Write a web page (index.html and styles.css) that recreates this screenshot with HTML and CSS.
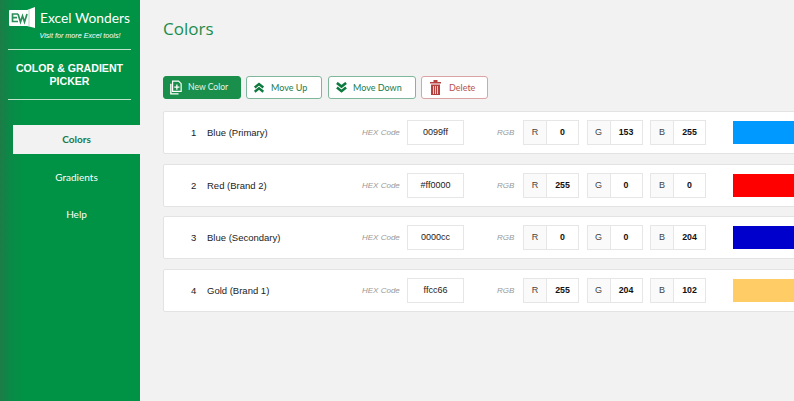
FILE: index.html
```html
<!DOCTYPE html>
<html lang="en">
<head>
<meta charset="utf-8">
<title>Color &amp; Gradient Picker</title>
<link rel="stylesheet" href="styles.css">
</head>
<body>
<div class="app">
  <aside class="sidebar">
    <div class="brand">
      <svg class="logo" width="27" height="22" viewBox="0 0 27 22">
        <path d="M0 4 Q0 3 1 3 L18 3 L26 0 L26 21 L18 19 L1 19 Q0 19 0 18 Z" fill="#fff"/>
        <path d="M20 2 L20 19.5" stroke="#9fcfb3" stroke-width=".8"/>
        <path d="M9 7 H3.5 V14.5 H9 M3.5 10.7 H8 M9 7 L11.5 15 L13.5 9 L15.5 15 L18 7" fill="none" stroke="#2b8f58" stroke-width="1.7"/>
      </svg>
      <span class="brand-name">Excel Wonders</span>
    </div>
    <div class="tagline">Visit for more Excel tools!</div>
    <h2 class="app-title">COLOR &amp; GRADIENT PICKER</h2>
    <nav class="nav">
      <a class="nav-item active">Colors</a>
      <a class="nav-item">Gradients</a>
      <a class="nav-item">Help</a>
    </nav>
  </aside>
  <main class="main">
    <h1 class="page-title">Colors</h1>
    <div class="toolbar">
      <button class="btn primary">
        <svg width="12" height="15" viewBox="0 0 14 17"><path d="M3 1 H10 L13 4 V13 H3 Z" fill="none" stroke="#fff" stroke-width="1.4"/><path d="M1 4 V16 H10" fill="none" stroke="#fff" stroke-width="1.6"/><path d="M8 5 V11 M5 8 H11" stroke="#fff" stroke-width="1.5"/></svg>
        New Color
      </button>
      <button class="btn green up">
        <svg width="12" height="11" viewBox="0 0 14 12"><path d="M2 6 L7 2 L12 6 M2 11 L7 7 L12 11" fill="none" stroke="#0f7a3f" stroke-width="2.8"/></svg>
        Move Up
      </button>
      <button class="btn green down">
        <svg width="13" height="11" viewBox="0 0 14 12"><path d="M2 1 L7 5 L12 1 M2 6 L7 10 L12 6" fill="none" stroke="#0f7a3f" stroke-width="2.8"/></svg>
        Move Down
      </button>
      <button class="btn red">
        <svg width="11" height="15" viewBox="0 0 11 15"><path d="M0 2 H11 V3.5 H0 Z M3.5 0 H7.5 V2 H3.5 Z" fill="#b5413f"/><path d="M1 4.5 H10 V15 H1 Z" fill="#b5413f"/><path d="M3.5 6 V14 M5.5 6 V14 M7.5 6 V14" stroke="#f2f2f2" stroke-width=".8"/></svg>
        Delete
      </button>
    </div>
    <div class="rows">
      <div class="row">
        <span class="num">1</span><span class="name">Blue (Primary)</span>
        <span class="cap hex-cap">HEX Code</span><span class="hex">0099ff</span>
        <span class="cap rgb-cap">RGB</span>
        <span class="chan"><i>R</i><b>0</b></span><span class="chan"><i>G</i><b>153</b></span><span class="chan"><i>B</i><b>255</b></span>
        <span class="swatch c1"></span>
      </div>
      <div class="row">
        <span class="num">2</span><span class="name">Red (Brand 2)</span>
        <span class="cap hex-cap">HEX Code</span><span class="hex">#ff0000</span>
        <span class="cap rgb-cap">RGB</span>
        <span class="chan"><i>R</i><b>255</b></span><span class="chan"><i>G</i><b>0</b></span><span class="chan"><i>B</i><b>0</b></span>
        <span class="swatch c2"></span>
      </div>
      <div class="row">
        <span class="num">3</span><span class="name">Blue (Secondary)</span>
        <span class="cap hex-cap">HEX Code</span><span class="hex">0000cc</span>
        <span class="cap rgb-cap">RGB</span>
        <span class="chan"><i>R</i><b>0</b></span><span class="chan"><i>G</i><b>0</b></span><span class="chan"><i>B</i><b>204</b></span>
        <span class="swatch c3"></span>
      </div>
      <div class="row">
        <span class="num">4</span><span class="name">Gold (Brand 1)</span>
        <span class="cap hex-cap">HEX Code</span><span class="hex">ffcc66</span>
        <span class="cap rgb-cap">RGB</span>
        <span class="chan"><i>R</i><b>255</b></span><span class="chan"><i>G</i><b>204</b></span><span class="chan"><i>B</i><b>102</b></span>
        <span class="swatch c4"></span>
      </div>
    </div>
  </main>
</div>
</body>
</html>
```

FILE: styles.css
```css
* { box-sizing: border-box; }
html, body { margin: 0; height: 100%; overflow: hidden; }
body { background: #f2f2f2; font-family: "Liberation Sans", Arial, sans-serif; }
.app { display: flex; width: 794px; height: 401px; overflow: hidden; }

.sidebar {
  flex: 0 0 140px;
  min-width: 0;
  background: linear-gradient(90deg, #1d7c46 0, #0a8a47 10px, #009245 24px);
  color: #fff;
  display: flex;
  flex-direction: column;
  padding-top: 7px;
}
.brand { display: flex; align-items: center; gap: 4px; margin-left: 9px; height: 22px; }
.logo { flex: none; }
.brand-name { font: 13.8px/22px Lato, sans-serif; white-space: nowrap; }
.tagline { font: italic 7.2px/10px "Liberation Sans", sans-serif; text-align: center; margin: 2px 0 0 20px; height: 18px; }
.app-title {
  margin: 0 9px 0 8px;
  height: 51px;
  border-top: 1px solid #bfe3cc;
  border-bottom: 1px solid #bfe3cc;
  padding-top: 12px;
  font: bold 10.6px/12.5px "Liberation Sans", sans-serif;
  text-align: center;
}
.nav { display: flex; flex-direction: column; margin-top: 25px; padding-left: 13px; }
.nav-item { height: 29px; margin-bottom: 8px; font: 10px/29px Lato, sans-serif; text-align: center; }
.nav-item.active { background: #f2f2f2; color: #17794a; font-weight: 700; margin-bottom: 9px; }

.main { flex: 1; min-width: 0; padding: 18px 0 0 23px; }
.page-title { margin: 0; font: 400 17px/22px "Open Sans", sans-serif; color: #1c8c4c; }
.toolbar { display: flex; margin-top: 36px; gap: 5px; }
.btn {
  height: 23px;
  padding: 0 0 0 6px;
  display: flex;
  align-items: center;
  justify-content: flex-start;
  gap: 6px;
  border-radius: 3px;
  font: 9px/21px Lato, sans-serif;
  background: #fff;
  border: 1px solid #7fb79a;
  color: #1a7a4a;
}
.btn svg { flex: none; }
.btn.primary { width: 78px; background: #1a8f4c; border-color: #1a8f4c; color: #e6f3ea; font-size: 8.6px; }
.btn.up { width: 76px; }
.btn.down { width: 88px; margin-left: 1px; gap: 5px; }
.btn.red { width: 67px; padding-left: 8px; border-color: #dba3a3; color: #b5544f; gap: 8px; }

.rows { margin-top: 12px; display: flex; flex-direction: column; gap: 9.5px; }
.row {
  height: 43px;
  width: 660px;
  display: flex;
  align-items: center;
  background: #fff;
  border: 1px solid #e3e3e3;
  border-radius: 2px;
  font-size: 9.5px;
  color: #222;
}
.num { width: 11px; margin-left: 27px; flex: none; }
.name { width: 155px; margin-left: 5px; flex: none; }
.cap { font-style: italic; color: #999; font-size: 8px; flex: none; }
.hex-cap { width: 45px; }
.hex {
  width: 57px; height: 25px; line-height: 23px; flex: none; font-size: 9px;
  text-align: center; border: 1px solid #e6e6e6; color: #222;
}
.rgb-cap { width: 26px; margin-left: 33px; }
.chan { display: flex; width: 56px; height: 25px; margin-right: 7.5px; border: 1px solid #e6e6e6; flex: none; }
.chan i { width: 23px; font-style: normal; text-align: center; line-height: 23px; border-right: 1px solid #e6e6e6; background: #fafafa; color: #444; font-size: 9px; }
.chan b { flex: 1; text-align: center; line-height: 23px; color: #111; font-size: 8.8px; }
.swatch { width: 70px; height: 23px; margin-left: 19.5px; flex: none; }
.c1 { background: #0099ff; }
.c2 { background: #ff0000; }
.c3 { background: #0000cc; }
.c4 { background: #ffcc66; }
```
